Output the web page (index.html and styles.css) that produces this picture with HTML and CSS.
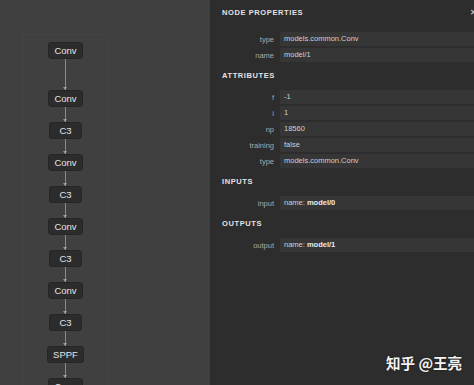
FILE: index.html
```html
<!DOCTYPE html>
<html lang="zh">
<head>
    <meta charset="UTF-8">
    <title>Model graph</title>
    <link rel="stylesheet" href="styles.css">
</head>
<body>
    <div class="app">
        <section class="canvas">
            <div class="cluster">
                <div class="node">Conv</div>
                <div class="edge long"></div>
                <div class="node">Conv</div>
                <div class="edge"></div>
                <div class="node">C3</div>
                <div class="edge"></div>
                <div class="node">Conv</div>
                <div class="edge"></div>
                <div class="node">C3</div>
                <div class="edge"></div>
                <div class="node">Conv</div>
                <div class="edge"></div>
                <div class="node">C3</div>
                <div class="edge"></div>
                <div class="node">Conv</div>
                <div class="edge"></div>
                <div class="node">C3</div>
                <div class="edge"></div>
                <div class="node">SPPF</div>
                <div class="edge"></div>
                <div class="node">Conv</div>
            </div>
        </section>

        <aside class="panel">
            <div class="panel-title">
                <span>Node Properties</span>
                <span class="close">✕</span>
            </div>
            <div class="rows">
                <div class="row"><label>type</label><div class="value">models.common.Conv</div></div>
                <div class="row"><label>name</label><div class="value">model/1</div></div>
            </div>

            <h4>Attributes</h4>
            <div class="rows">
                <div class="row"><label>f</label><div class="value">-1</div></div>
                <div class="row"><label>i</label><div class="value">1</div></div>
                <div class="row"><label>np</label><div class="value">18560</div></div>
                <div class="row"><label>training</label><div class="value">false</div></div>
                <div class="row"><label>type</label><div class="value">models.common.Conv</div></div>
            </div>

            <h4>Inputs</h4>
            <div class="rows">
                <div class="row"><label>input</label><div class="value">name: <b>model/0</b></div></div>
            </div>

            <h4>Outputs</h4>
            <div class="rows">
                <div class="row"><label>output</label><div class="value">name: <b>model/1</b></div></div>
            </div>
        </aside>

        <div class="watermark">知乎 @王亮</div>
    </div>
</body>
</html>
```

FILE: styles.css
```css
* {
    box-sizing: border-box;
    margin: 0;
    padding: 0;
}

body {
    font-family: 'Liberation Sans', Arial, sans-serif;
    background-color: #2d2d2d;
    color: #ccc;
}

.app {
    position: relative;
    display: flex;
    height: 385px;
    overflow: hidden;
}

/* graph canvas */
.canvas {
    width: 210px;
    flex-shrink: 0;
    background-color: #404040;
    padding-top: 34px;
}

.cluster {
    margin-left: 23px;
    width: 85px;
    height: 400px;
    border: 1px solid rgba(255, 255, 255, 0.025);
    padding-top: 7px;
    display: flex;
    flex-direction: column;
    align-items: center;
}

.node {
    height: 17px;
    min-width: 23px;
    padding: 0 5px;
    background-color: #2c2c2c;
    border: 1px solid #262626;
    border-radius: 3px;
    color: #e4e4e4;
    font-size: 9.5px;
    line-height: 15px;
    text-align: center;
}

.node:nth-child(4n+1) {
    min-width: 33px;
}

.edge {
    position: relative;
    width: 1px;
    height: 15px;
    background-color: #8c8c8c;
}

.edge.long {
    height: 31px;
}

.edge::after {
    content: "";
    position: absolute;
    bottom: 0;
    left: -2px;
    border-left: 2.5px solid transparent;
    border-right: 2.5px solid transparent;
    border-top: 3px solid #9a9a9a;
}

/* properties panel */
.panel {
    flex: 1;
    background-color: #2d2d2d;
    font-size: 7.5px;
}

.panel-title,
.panel h4 {
    font-size: 7.5px;
    font-weight: bold;
    text-transform: uppercase;
    letter-spacing: 0.6px;
    color: #e2e2e2;
    line-height: 10px;
}

.panel-title {
    display: flex;
    justify-content: space-between;
    padding: 8px 0 14px 12px;
}

.close {
    margin-right: -4px;
    font-size: 8px;
    color: #bbb;
}

.panel h4 {
    padding: 9px 12px 9px;
}

.rows {
    display: flex;
    flex-direction: column;
    gap: 2px;
}

.row {
    display: flex;
    align-items: center;
    gap: 6px;
    height: 14px;
}

.row label {
    width: 64px;
    text-align: right;
    color: #a8a8a8;
}

.row .value {
    flex: 1;
    height: 14px;
    line-height: 14px;
    padding-left: 4px;
    background-color: #363636;
    color: #cfcfcf;
}

.row .value b {
    color: #ececec;
}

.watermark {
    position: absolute;
    right: 12px;
    bottom: 12px;
    font-family: 'Noto Sans CJK SC', sans-serif;
    font-size: 14.5px;
    font-weight: bold;
    color: #f4f4f4;
    text-shadow: 0 0 2px rgba(0, 0, 0, 0.6);
}
```
